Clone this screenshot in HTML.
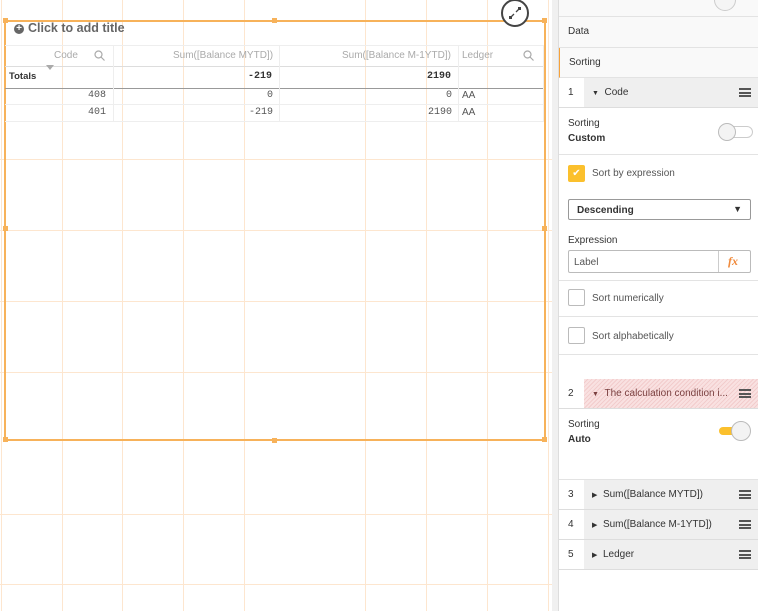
<!DOCTYPE html>
<html><head><meta charset="utf-8"><style>
*{box-sizing:border-box;margin:0;padding:0}
body{width:758px;height:611px;overflow:hidden;background:#fff;font-family:"Liberation Sans",sans-serif;position:relative;color:#404040}
.abs{position:absolute}
.vl{position:absolute;top:0;width:1px;height:611px;background:#fde6cf}
.hl{position:absolute;left:0;width:552px;height:1px;background:#fde6cf}
.mono{font-family:"Liberation Mono",monospace;font-size:10px;color:#555}
.hdr{font-size:10px;color:#aaa}
.panel{position:absolute;left:558px;top:0;width:200px;height:611px;background:#fff;border-left:1px solid #ddd}
.row{position:absolute;left:0;width:200px;border-bottom:1px solid #e3e3e3;font-size:10px;color:#333}
.ih{position:absolute;left:0;width:200px;height:30px;background:#efefef;border-bottom:1px solid #ddd;font-size:10px;color:#333}
.ih .n{position:absolute;left:0;top:0;width:25px;height:29px;background:#fff;line-height:29px;padding-left:9px}
.ih .t{position:absolute;left:33px;top:0;line-height:29px}
.ham{position:absolute;right:8px;top:10px;width:12px;height:9px;border-top:2px solid #555;border-bottom:2px solid #555}
.ham:after{content:"";position:absolute;left:0;top:1.5px;width:12px;height:2px;background:#555}
.cb{position:absolute;left:9px;width:17px;height:17px;border:1px solid #bbb;border-radius:2px;background:#fff}
</style></head><body>
<div class="abs" style="left:552px;top:0;width:6px;height:611px;background:#f0f0f0"></div>
<div class="vl" style="left:1px"></div><div class="vl" style="left:62px"></div><div class="vl" style="left:122px"></div><div class="vl" style="left:183px"></div><div class="vl" style="left:244px"></div><div class="vl" style="left:365px"></div><div class="vl" style="left:426px"></div><div class="vl" style="left:487px"></div><div class="vl" style="left:548px"></div>
<div class="hl" style="top:159px"></div><div class="hl" style="top:230px"></div><div class="hl" style="top:301px"></div><div class="hl" style="top:372px"></div><div class="hl" style="top:514px"></div><div class="hl" style="top:584px"></div>
<div class="abs" style="left:4px;top:20px;width:542px;height:421px;border:2px solid #f7b25a"></div>
<div class="abs" style="left:3px;top:18px;width:5px;height:5px;background:#f7b25a"></div>
<div class="abs" style="left:272px;top:18px;width:5px;height:5px;background:#f7b25a"></div>
<div class="abs" style="left:542px;top:18px;width:5px;height:5px;background:#f7b25a"></div>
<div class="abs" style="left:3px;top:437px;width:5px;height:5px;background:#f7b25a"></div>
<div class="abs" style="left:272px;top:438px;width:5px;height:5px;background:#f7b25a"></div>
<div class="abs" style="left:542px;top:437px;width:5px;height:5px;background:#f7b25a"></div>
<div class="abs" style="left:3px;top:226px;width:5px;height:5px;background:#f7b25a"></div>
<div class="abs" style="left:542px;top:226px;width:5px;height:5px;background:#f7b25a"></div>
<svg class="abs" style="left:500px;top:-2px" width="30" height="30" viewBox="0 0 30 30"><circle cx="15" cy="15" r="13" fill="#fff" stroke="#444" stroke-width="2"/><path d="M11 19l3-3M19 11l-3 3" stroke="#444" stroke-width="1.3"/><rect x="9" y="18" width="3" height="3" fill="#444"/><rect x="18" y="9" width="3" height="3" fill="#444"/></svg>
<div class="abs" style="left:14px;top:24px;width:10px;height:10px;border-radius:50%;background:#666;color:#fff;font-size:10px;line-height:10px;text-align:center;font-weight:bold">+</div>
<div class="abs" style="left:28px;top:21px;font-size:12.5px;font-weight:bold;color:#666">Click to add title</div>
<div class="abs" style="left:5px;top:45px;width:539px;height:1px;background:#eee"></div>
<div class="abs" style="left:5px;top:66px;width:539px;height:1px;background:#ddd"></div>
<div class="abs" style="left:5px;top:88px;width:539px;height:1px;background:#999"></div>
<div class="abs" style="left:5px;top:104px;width:539px;height:1px;background:#eee"></div>
<div class="abs" style="left:5px;top:121px;width:539px;height:1px;background:#eee"></div>
<div class="abs" style="left:113px;top:45px;width:1px;height:76px;background:#eee"></div>
<div class="abs" style="left:279px;top:45px;width:1px;height:76px;background:#eee"></div>
<div class="abs" style="left:458px;top:45px;width:1px;height:76px;background:#eee"></div>
<div class="abs" style="left:543px;top:45px;width:1px;height:76px;background:#eee"></div>
<div class="abs hdr" style="left:54px;top:50px">Code</div>
<svg class="abs" style="left:94px;top:50px" width="11" height="11"><circle cx="4.5" cy="4.5" r="3.5" fill="none" stroke="#aaa" stroke-width="1.2"/><path d="M7 7l3.5 3.5" stroke="#aaa" stroke-width="1.2"/></svg>
<div class="abs" style="left:46px;top:65px;border-left:4px solid transparent;border-right:4px solid transparent;border-top:5px solid #aaa"></div>
<div class="abs hdr" style="left:173px;top:50px">Sum([Balance MYTD])</div>
<div class="abs hdr" style="left:342px;top:50px">Sum([Balance M-1YTD])</div>
<div class="abs hdr" style="left:462px;top:50px">Ledger</div>
<svg class="abs" style="left:523px;top:50px" width="11" height="11"><circle cx="4.5" cy="4.5" r="3.5" fill="none" stroke="#aaa" stroke-width="1.2"/><path d="M7 7l3.5 3.5" stroke="#aaa" stroke-width="1.2"/></svg>
<div class="abs" style="left:9px;top:71px;font-size:9.5px;font-weight:bold;color:#333">Totals</div>
<div class="abs mono" style="left:248px;top:71px;font-weight:bold;color:#333">-219</div>
<div class="abs mono" style="left:427px;top:71px;font-weight:bold;color:#333">2190</div>
<div class="abs mono" style="left:88px;top:90px">408</div>
<div class="abs mono" style="left:267px;top:90px">0</div>
<div class="abs mono" style="left:446px;top:90px">0</div>
<div class="abs" style="left:462px;top:90px;font-size:10px;color:#555">AA</div>
<div class="abs mono" style="left:88px;top:107px">401</div>
<div class="abs mono" style="left:249px;top:107px">-219</div>
<div class="abs mono" style="left:428px;top:107px">2190</div>
<div class="abs" style="left:462px;top:107px;font-size:10px;color:#555">AA</div>
<div class="panel">
<div class="row" style="top:0;height:17px;background:#f9f9f9"><div class="abs" style="left:155px;top:-11px;width:22px;height:22px;border-radius:50%;border:1px solid #ccc;background:#f5f5f5"></div></div>
<div class="row" style="top:17px;height:31px;background:#f9f9f9;padding:9px 0 0 9px">Data</div>
<div class="row" style="top:48px;height:30px;background:#f9f9f9;padding:9px 0 0 9px;border-left:1px solid #f7a23a">Sorting</div>
<div class="ih" style="top:78px"><div class="n">1</div><div class="t"><span style="font-size:7px">▼</span>&nbsp;&nbsp;Code</div><div class="ham"></div></div>
<div class="row" style="top:108px;height:47px;padding:10px 0 0 9px">Sorting<br><b style="line-height:20px">Custom</b>
<div class="abs" style="left:160px;top:18px;width:34px;height:12px;border:1px solid #ccc;border-radius:7px;background:#fff"></div>
<div class="abs" style="left:159px;top:15px;width:18px;height:18px;border:1px solid #bbb;border-radius:50%;background:#f3f3f3"></div></div>
<div class="cb" style="top:165px;background:#fbc02d;border-color:#fbc02d;color:#fff;font-size:10px;text-align:center;line-height:15px">✔</div>
<div class="abs" style="left:33px;top:168px;font-size:10px;color:#555">Sort by expression</div>
<div class="abs" style="left:9px;top:199px;width:183px;height:21px;border:1px solid #999;border-radius:2px;font-size:10px;font-weight:bold;color:#333;padding:5px 0 0 8px">Descending<span style="position:absolute;right:8px;top:4px;font-size:9px">▼</span></div>
<div class="abs" style="left:9px;top:235px;font-size:10px;color:#333">Expression</div>
<div class="abs" style="left:9px;top:250px;width:183px;height:23px;border:1px solid #bbb;border-radius:2px;font-size:10px;color:#555;padding:6px 0 0 5px">Label<div class="abs" style="left:149px;top:0;width:1px;height:21px;background:#ccc"></div><div class="abs" style="left:159px;top:3px;font-family:'Liberation Serif',serif;font-style:italic;font-weight:bold;color:#f08a3c;font-size:12px">fx</div></div>
<div class="row" style="top:280px;height:1px"></div>
<div class="cb" style="top:289px"></div><div class="abs" style="left:33px;top:293px;font-size:10px;color:#555">Sort numerically</div>
<div class="row" style="top:316px;height:1px"></div>
<div class="cb" style="top:327px"></div><div class="abs" style="left:33px;top:331px;font-size:10px;color:#555">Sort alphabetically</div>
<div class="row" style="top:354px;height:1px"></div>
<div class="ih" style="top:379px;background:repeating-linear-gradient(135deg,#f9e1e1 0 2px,#f2cccc 2px 3px)"><div class="n">2</div><div class="t" style="color:#7a4040"><span style="font-size:7px">▼</span>&nbsp;&nbsp;The calculation condition i...</div><div class="ham"></div></div>
<div class="row" style="top:409px;height:71px;padding:10px 0 0 9px">Sorting<br><b style="line-height:20px">Auto</b>
<div class="abs" style="left:160px;top:18px;width:22px;height:8px;border-radius:4px;background:#fbc02d"></div>
<div class="abs" style="left:172px;top:12px;width:20px;height:20px;border:1px solid #bbb;border-radius:50%;background:#f3f3f3"></div></div>
<div class="ih" style="top:480px"><div class="n">3</div><div class="t"><span style="font-size:7px">▶</span>&nbsp;&nbsp;Sum([Balance MYTD])</div><div class="ham"></div></div>
<div class="ih" style="top:510px"><div class="n">4</div><div class="t"><span style="font-size:7px">▶</span>&nbsp;&nbsp;Sum([Balance M-1YTD])</div><div class="ham"></div></div>
<div class="ih" style="top:540px"><div class="n">5</div><div class="t"><span style="font-size:7px">▶</span>&nbsp;&nbsp;Ledger</div><div class="ham"></div></div>
</div>
</body></html>
